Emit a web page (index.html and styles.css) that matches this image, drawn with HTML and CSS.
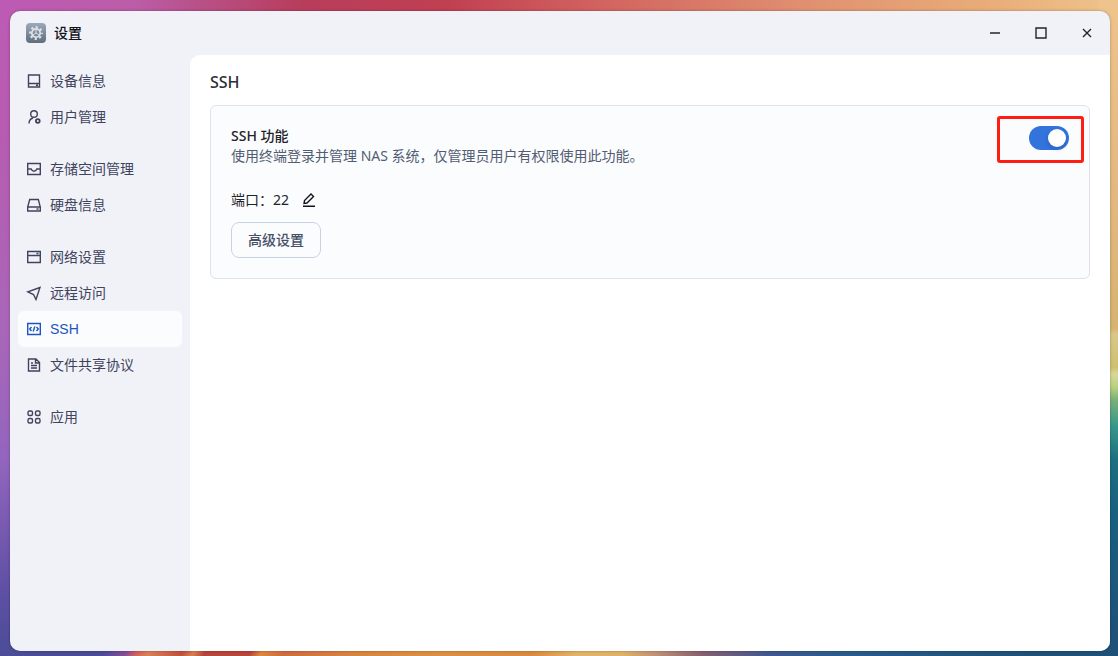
FILE: index.html
```html
<!DOCTYPE html>
<html lang="zh-CN">

<head>
    <meta charset="UTF-8">
    <meta name="viewport" content="width=device-width, initial-scale=1.0">
    <title>设置</title>
    <link rel="stylesheet" href="styles.css">
</head>

<body>
    <div class="window">
        <header class="titlebar">
            <svg class="app-icon" viewBox="0 0 20 20">
                <defs>
                    <linearGradient id="appBg" x1="0" y1="0" x2="0" y2="1">
                        <stop offset="0" stop-color="#9aaabd" />
                        <stop offset="1" stop-color="#5f6e7e" />
                    </linearGradient>
                </defs>
                <rect width="20" height="20" rx="4" fill="url(#appBg)" />
                <g fill="none" stroke="#e1e3e6">
                    <circle cx="10" cy="10" r="5.900" stroke-width="2" stroke-dasharray="2.2 2.434" stroke-dashoffset="1.1" />
                    <circle cx="10" cy="10" r="4.200" stroke-width="1.700" />
                    <path d="M10 10V7M10 10l-3 2M10 10l3 2" stroke-width="1" />
                </g>
            </svg>
            <h1 class="app-name">设置</h1>
            <div class="window-controls">
                <button type="button" class="window-button" aria-label="最小化">
                    <svg viewBox="0 0 16 16"><path d="M3 8h10" stroke-width="1.6" /></svg>
                </button>
                <button type="button" class="window-button" aria-label="最大化">
                    <svg viewBox="0 0 16 16"><path d="M3 3h10v10H3z" /></svg>
                </button>
                <button type="button" class="window-button" aria-label="关闭">
                    <svg viewBox="0 0 16 16"><path d="M4 4l8 8M12 4l-8 8" /></svg>
                </button>
            </div>
        </header>

        <div class="layout">
            <!-- Боковое меню -->
            <nav class="sidebar">
                <div class="nav-group">
                    <a href="#device" class="nav-item">
                        <svg viewBox="0 0 16 16"><path d="M2.500 2h11v12h-11zM2.500 10.500h11M10 12.200h2" /></svg>
                        设备信息
                    </a>
                    <a href="#users" class="nav-item">
                        <svg viewBox="0 0 16 16"><circle cx="8" cy="5" r="3.300" /><path d="M3 14.500c0-3 1.500-4.800 4-5.500" /><circle cx="11.800" cy="12" r="1.900" stroke-width="1.800" /></svg>
                        用户管理
                    </a>
                </div>
                <div class="nav-group">
                    <a href="#storage" class="nav-item">
                        <svg viewBox="0 0 16 16"><path d="M1.700 2.500h12.600v11H1.700zM1.700 8h3.500c.5 1.500 1.500 2.200 2.800 2.200s2.300-.7 2.800-2.200h3.500" /></svg>
                        存储空间管理
                    </a>
                    <a href="#disks" class="nav-item">
                        <svg viewBox="0 0 16 16"><path d="M3.700 2.500h8.600l2 7.500v4H1.700v-4zM1.700 10h12.600M10.500 12h2" /></svg>
                        硬盘信息
                    </a>
                </div>
                <div class="nav-group">
                    <a href="#network" class="nav-item">
                        <svg viewBox="0 0 16 16"><path d="M1.700 2.500h12.600v11H1.700zM1.700 6.500h12.600M10.500 4.500h2" /></svg>
                        网络设置
                    </a>
                    <a href="#remote" class="nav-item">
                        <svg viewBox="0 0 16 16"><path d="M14 2.500L1.800 6.800l5.700 2.700 2.500 5z" /></svg>
                        远程访问
                    </a>
                    <a href="#ssh" class="nav-item active">
                        <svg viewBox="0 0 16 16"><path d="M1.700 2.500h12.600v11H1.700zM5.500 6L3.700 8l1.800 2M10.500 6l1.800 2-1.800 2M8.800 5.500l-1.600 5" /></svg>
                        SSH
                    </a>
                    <a href="#sharing" class="nav-item">
                        <svg viewBox="0 0 16 16"><path d="M2.500 2H10l3.500 3.500V14h-11zM9.500 2v4h4M5 6h2M5 8.500h6M5 11h6" /></svg>
                        文件共享协议
                    </a>
                </div>
                <div class="nav-group">
                    <a href="#apps" class="nav-item">
                        <svg viewBox="0 0 16 16"><rect x="2" y="2" width="4.500" height="4.500" rx="1.500" /><rect x="9.500" y="2" width="4.500" height="4.500" rx="1.500" /><rect x="2" y="9.500" width="4.500" height="4.500" rx="1.500" /><rect x="9.500" y="9.500" width="4.500" height="4.500" rx="1.500" /></svg>
                        应用
                    </a>
                </div>
            </nav>

            <!-- Настройки SSH -->
            <main class="content">
                <h2 class="page-title">SSH</h2>
                <section class="card">
                    <div class="card-head">
                        <div>
                            <label class="card-title" for="sshSwitch">SSH 功能</label>
                            <p class="card-text">使用终端登录并管理 NAS 系统，仅管理员用户有权限使用此功能。</p>
                        </div>
                        <div class="switch-box">
                            <input type="checkbox" id="sshSwitch" class="switch" role="switch" checked>
                        </div>
                    </div>
                    <div class="port">
                        <span>端口：22</span>
                        <button type="button" class="edit-button" aria-label="修改端口">
                            <svg viewBox="0 0 16 16"><path d="M3 11.500l.5-3L10 2l2.500 2.500L6 11z" /><path d="M2 14.200h12" /></svg>
                        </button>
                    </div>
                    <button type="button" class="advanced-button">高级设置</button>
                </section>
            </main>
        </div>
    </div>
</body>

</html>
```
FILE: styles.css
```css
* {
    box-sizing: border-box;
}

/* Рабочий стол: цветные полосы по краям окна */
body {
    display: flex;
    min-height: 100vh;
    margin: 0;
    padding: 11px 8px 5px 10px;
    font-family: "Noto Sans", "Noto Sans CJK SC", sans-serif;
    font-size: 14px;
    line-height: 20px;
    color: #1f2329;
    background:
        linear-gradient(#bd5bb4 0, #b75cb0 20%, #a966b8 50%, #9365be 70%, #5f50a5 90%, #4b4c98 100%) left / 20px 100% no-repeat,
        linear-gradient(#eec48c 0, #e3b880 30%, #d6b470 50%, #d8c888 51%, #cfc070 56%, #d8d898 57%, #b8d080 59%, #78b078 61%, #35988c 65%, #1c7080 70%, #1a6080 78%, #1f5078 100%) right / 20px 100% no-repeat,
        linear-gradient(90deg, #bd5bb4 0, #bb5da8 12%, #b85087 18%, #b83d5c 27%, #c04052 40%, #d26460 54%, #e09070 72%, #e8ac78 88%, #eec48c 100%) top / 100% 20px no-repeat,
        linear-gradient(120deg, #4b4c98 0, #4b4c98 10%, #844d96 12%, #d8605a 13%, #d98058 14%, #c05040 17%, #d98050 18%, #b8443c 19%, #b8443c 23%, #dc8840 24%, #d06a40 26%, #d88440 32%, #dc9044 40%, #d98a40 48%, #e3b468 52%, #e0b268 56%, #c09078 59%, #886070 63%, #405890 69%, #285c8c 76%, #1f5078 92%) bottom / 100% 20px no-repeat;
}

h1,
h2,
p {
    margin: 0;
}

button {
    font: inherit;
    cursor: pointer;
}

svg {
    flex: none;
    width: 16px;
    height: 16px;
    fill: none;
    stroke: currentColor;
    stroke-width: 1.4;
}

/* Окно */
.window {
    display: flex;
    flex: 1;
    flex-direction: column;
    overflow: hidden;
    background-color: #f1f2f8;
    border-radius: 10px;
    box-shadow: 0 0 3px rgba(0, 0, 0, 0.3);
}

.titlebar {
    display: flex;
    align-items: center;
    height: 44px;
    padding-left: 16px;
}

.app-icon {
    width: 20px;
    height: 20px;
    stroke: none;
}

.app-name {
    margin-left: 8px;
    font-size: 14px;
    font-weight: 500;
    color: #10131c;
}

.window-controls {
    display: flex;
    margin-left: auto;
}

.window-button {
    display: flex;
    align-items: center;
    justify-content: center;
    width: 46px;
    height: 44px;
    padding: 0;
    color: #22242e;
    background: none;
    border: 0;
}

.layout {
    display: flex;
    flex: 1;
}

/* Боковое меню */
.sidebar {
    display: flex;
    flex: none;
    flex-direction: column;
    gap: 16px;
    width: 180px;
    padding: 8px;
}

.nav-item {
    display: flex;
    align-items: center;
    gap: 8px;
    height: 36px;
    padding: 0 8px;
    font-family: "Liberation Sans", "Noto Sans CJK SC", sans-serif;
    color: #40435c;
    text-decoration: none;
    border-radius: 6px;
}

.nav-item.active {
    color: #1c55bd;
    background-color: #fbfcfe;
}

/* Содержимое */
.content {
    flex: 1;
    padding: 16px 20px;
    background-color: #fff;
    border-top-left-radius: 10px;
}

.page-title {
    font-size: 16px;
    font-weight: 500;
    line-height: 22px;
    color: #2b2e36;
}

.card {
    margin-top: 12px;
    padding: 20px;
    background-color: #fbfcfe;
    border: 1px solid #dfe1ec;
    border-radius: 6px;
}

.card-head {
    display: flex;
    align-items: flex-start;
    justify-content: space-between;
}

.card-title {
    display: block;
    font-weight: 500;
}

.card-text {
    color: #525c72;
}

/* Красная рамка вокруг переключателя */
.switch-box {
    position: relative;
    display: flex;
}

.switch-box::after {
    content: "";
    position: absolute;
    top: -10px;
    right: -15px;
    bottom: -13px;
    left: -32px;
    border: 3px solid #ff1c12;
    border-radius: 3px;
    pointer-events: none;
}

.switch {
    width: 40px;
    height: 24px;
    margin: 0;
    padding: 3px;
    appearance: none;
    background-color: #3273dc;
    border-radius: 12px;
    cursor: pointer;
}

.switch::before {
    content: "";
    display: block;
    width: 18px;
    height: 18px;
    background-color: #fff;
    border-radius: 50%;
    box-shadow: 0 2px 4px rgba(0, 35, 90, 0.2);
}

.switch:checked::before {
    margin-left: auto;
}

.port {
    display: flex;
    align-items: center;
    gap: 12px;
    margin-top: 24px;
}

.edit-button {
    display: flex;
    padding: 0;
    color: #10131c;
    background: none;
    border: 0;
}

.advanced-button {
    height: 36px;
    margin-top: 12px;
    padding: 0 16px;
    font-weight: 500;
    color: #475166;
    background-color: #fbfcfe;
    border: 1px solid #c8d3e2;
    border-radius: 8px;
}
```
